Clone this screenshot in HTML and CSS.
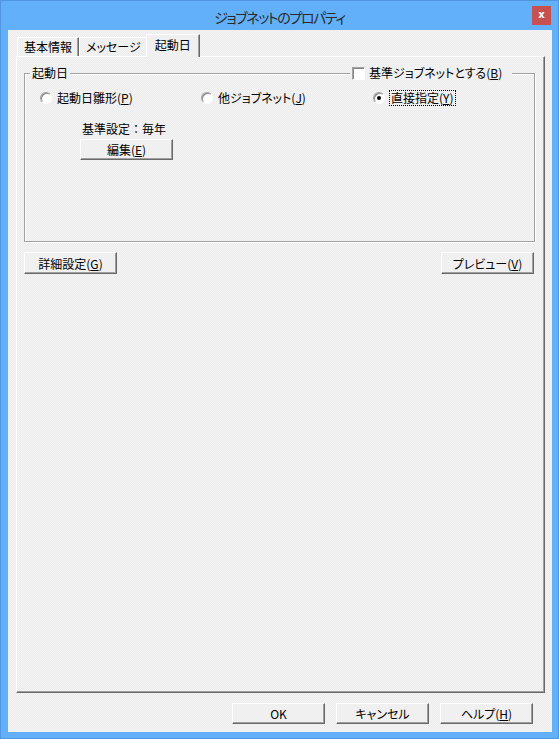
FILE: index.html
```html
<!DOCTYPE html>
<html lang="ja">
<head>
<meta charset="utf-8">
<title>ジョブネットのプロパティ</title>
<link rel="stylesheet" href="styles.css">
</head>
<body>
<div class="window">
  <div class="titlebar">
    <span></span>
    <span class="title">ジョブネットのプロパティ</span>
    <span class="close">x</span>
  </div>
  <div class="client">
    <div class="tabs">
      <div class="tab">基本情報</div>
      <div class="tab">メッセージ</div>
      <div class="tab selected">起動日</div>
    </div>
    <div class="panel">
      <div class="group">
        <span class="legend">起動日</span>
        <label class="legend-check"><span class="checkbox"></span><span>基準ジョブネットとする(<u>B</u>)</span></label>
        <div class="radios">
          <div class="radio-item w1"><span class="radio"></span><span>起動日雛形(<u>P</u>)</span></div>
          <div class="radio-item w2"><span class="radio"></span><span>他ジョブネット(<u>J</u>)</span></div>
          <div class="radio-item"><span class="radio checked"></span><span class="focus">直接指定(<u>Y</u>)</span></div>
        </div>
        <div class="sub">
          <div class="sub-label">基準設定：毎年</div>
          <div class="btn">編集(<u>E</u>)</div>
        </div>
      </div>
      <div class="row">
        <div class="btn tall">詳細設定(<u>G</u>)</div>
        <div class="btn tall">プレビュー(<u>V</u>)</div>
      </div>
    </div>
    <div class="footer">
      <div class="btn">OK</div>
      <div class="btn">キャンセル</div>
      <div class="btn">ヘルプ(<u>H</u>)</div>
    </div>
  </div>
</div>
</body>
</html>
```

FILE: styles.css
```css
* { box-sizing: border-box; }
html, body { margin: 0; padding: 0; }
body {
  width: 559px;
  height: 739px;
  font-family: "Noto Sans CJK JP", "Liberation Sans", sans-serif;
  font-size: 12px;
  line-height: 14px;
  color: #000;
  font-feature-settings: "palt";
}
u { text-decoration: underline; text-underline-offset: 1px; }

.window {
  width: 559px;
  height: 739px;
  background: #62b0f9;
  border: 1px solid #4f97e0;
  display: flex;
  flex-direction: column;
}
.titlebar {
  height: 29px;
  display: grid;
  grid-template-columns: 1fr auto 1fr;
  align-items: start;
}
.title {
  font-size: 14px;
  line-height: 18px;
  color: #2a2a2a;
  margin-top: 7px;
  letter-spacing: -1.4px;
}
.close {
  justify-self: end;
  margin-top: 5px;
  margin-right: 7px;
  width: 19px;
  height: 19px;
  background: #c75050;
  color: #fff;
  font-family: "DejaVu Sans", sans-serif;
  font-weight: bold;
  font-size: 10px;
  line-height: 17px;
  text-align: center;
}

.client {
  flex: 1;
  margin: 0 6px 6px 7px;
  background-color: #f0f0f0;
  background-image: repeating-conic-gradient(#ececec 0 25%, #f4f4f4 0 50%);
  background-size: 2px 2px;
  display: flex;
  flex-direction: column;
}

.tabs {
  display: flex;
  align-items: flex-end;
  padding: 3px 0 0 9px;
  height: 26px;
  position: relative;
  z-index: 1;
}
.tab {
  height: 19px;
  padding: 2px 6px 0 6px;
  border-top: 1px solid #fff;
  border-left: 1px solid #fff;
  border-right: 1px solid #696969;
  box-shadow: inset -1px 0 0 #a0a0a0;
  white-space: nowrap;
}
.tab.selected {
  height: 23px;
  margin-left: -2px;
  margin-bottom: -1px;
  padding: 3px 8px 0 8px;
  background: #f0f0f0;
}

.panel {
  flex: 1;
  margin: 0 7px 0 8px;
  border-top: 1px solid #fff;
  border-left: 1px solid #fff;
  border-right: 1px solid #696969;
  border-bottom: 1px solid #696969;
  box-shadow: inset -1px -1px 0 #a0a0a0;
  padding: 16px 10px 0 7px;
  display: flex;
  flex-direction: column;
}

.group {
  position: relative;
  height: 169px;
  margin-right: -1px;
  border: 1px solid #a0a0a0;
  box-shadow: inset 1px 1px 0 #fff, 1px 1px 0 #fff;
  padding: 17px 0 0 15px;
}
.legend {
  position: absolute;
  top: -8px;
  left: 5px;
  padding: 0 2px;
  background: #f0f0f0;
}
.legend-check {
  position: absolute;
  top: -8px;
  left: 325px;
  width: 162px;
  padding-left: 2px;
  background: #f0f0f0;
  display: flex;
  align-items: center;
  gap: 4px;
}
.checkbox {
  width: 13px;
  height: 13px;
  background: #fff;
  border: 1px solid;
  border-color: #a0a0a0 #fff #fff #a0a0a0;
  box-shadow: inset 1px 1px 0 #8a8a8a;
}

.radios {
  display: flex;
  align-items: center;
  height: 14px;
}
.radio-item {
  display: flex;
  align-items: center;
  gap: 5px;
}
.w1 { width: 161px; }
.w2 { width: 172px; }
.radio {
  width: 12px;
  height: 12px;
  border-radius: 50%;
  background: #fff;
  border: 1px solid;
  border-color: #a0a0a0 #fff #fff #a0a0a0;
  box-shadow: inset 1px 1px 0 #8a8a8a;
  position: relative;
}
.radio.checked::after {
  content: "";
  position: absolute;
  left: 3px;
  top: 3px;
  width: 4px;
  height: 4px;
  border-radius: 50%;
  background: #000;
}
.focus {
  outline: 1px dotted #000;
  outline-offset: 0;
  padding: 0 1px;
}

.sub {
  margin: 17px 0 0 40px;
  display: flex;
  flex-direction: column;
  align-items: flex-start;
  gap: 3px;
}
.sub-label {
  padding-left: 2px;
  font-feature-settings: normal;
}

.btn {
  width: 93px;
  height: 21px;
  display: flex;
  align-items: center;
  justify-content: center;
  background: #f0f0f0;
  border-top: 1px solid #fff;
  border-left: 1px solid #fff;
  border-right: 1px solid #696969;
  border-bottom: 1px solid #696969;
  box-shadow: inset -1px -1px 0 #a0a0a0;
  white-space: nowrap;
  padding-top: 1px;
}
.btn.tall { height: 22px; }

.row {
  margin-top: 10px;
  display: flex;
  justify-content: space-between;
}

.footer {
  height: 39px;
  display: flex;
  justify-content: flex-end;
  gap: 11px;
  padding: 10px 19px 0 0;
}
```
